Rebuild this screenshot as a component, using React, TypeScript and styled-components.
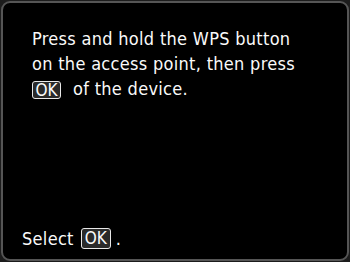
import React from "react";
import styled, { createGlobalStyle } from "styled-components";

const Global = createGlobalStyle`
  html, body { margin: 0; padding: 0; background: #1c1c1c; }
  body { width: 350px; height: 262px; overflow: hidden; }
`;

const Screen = styled.div`
  box-sizing: border-box;
  width: 348px;
  height: 260px;
  margin: 1px;
  border: 2px solid #555;
  border-radius: 9px;
  background: #000;
  display: flex;
  flex-direction: column;
  justify-content: space-between;
  font-family: "DejaVu Sans Condensed", "DejaVu Sans", sans-serif;
  color: #fafafa;
`;

const Message = styled.div`
  padding: 23px 0 0 29px;
  font-size: 18px;
  letter-spacing: 0.3px;
  line-height: 25px;
`;

const Footer = styled.div`
  padding: 0 0 8px 19px;
  font-size: 18px;
  letter-spacing: 0.3px;
  line-height: 25px;
  display: flex;
  align-items: center;
`;

const Key = styled.span<{ $w: number; $h: number; $left: number; $right: number }>`
  display: inline-flex;
  align-items: center;
  justify-content: center;
  box-sizing: border-box;
  width: ${(p) => p.$w}px;
  height: ${(p) => p.$h}px;
  border: 1.5px solid #e8e8e8;
  border-radius: 3px;
  background: #2a2a2a;
  font-size: 17px;
  letter-spacing: 0;
  line-height: 1;
  vertical-align: middle;
  margin-left: ${(p) => p.$left}px;
  margin-right: ${(p) => p.$right}px;
`;

export default function App() {
  return (
    <>
      <Global />
      <Screen>
        <Message>
          Press and hold the WPS button
          <br />
          on the access point, then press
          <br />
          <Key $w={29} $h={18} $left={0} $right={12}>OK</Key>of the device.
        </Message>
        <Footer>
          Select<Key $w={30} $h={21} $left={7} $right={5}>OK</Key>.
        </Footer>
      </Screen>
    </>
  );
}
